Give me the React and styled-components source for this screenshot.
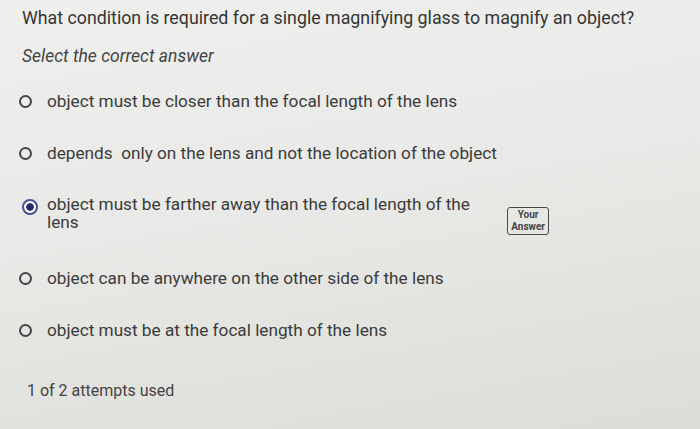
import React from 'react'
import styled, { createGlobalStyle } from 'styled-components'

const GlobalStyle = createGlobalStyle`
  html, body {
    margin: 0;
    padding: 0;
  }
  body {
    font-family: Roboto, "Liberation Sans", sans-serif;
    color: #3b3b3b;
  }
`

const Page = styled.div`
  width: 700px;
  height: 429px;
  box-sizing: border-box;
  padding: 7px 22px 0 22px;
  background: linear-gradient(170deg, #efefed 0%, #e9e9e7 45%, #dcdcd8 100%);
  overflow: hidden;
`

const Question = styled.div`
  font-size: 17.8px;
  line-height: 22px;
  color: #353535;
`

const Hint = styled.div`
  margin-top: 17px;
  font-size: 17.5px;
  line-height: 20px;
  font-style: italic;
  color: #444;
`

const Options = styled.div`
  margin-top: 9px;
  display: flex;
  flex-direction: column;
`

const Option = styled.div`
  display: flex;
  align-items: ${(p) => (p.multi ? 'flex-start' : 'center')};
  min-height: 52px;
  padding: ${(p) => (p.multi ? '16px 0 17px' : '0')};
  box-sizing: border-box;
`

const Radio = styled.span`
  flex: none;
  width: 13px;
  height: 13px;
  margin: 0 15px 0 -3px;
  border-radius: 50%;
  box-sizing: border-box;
  border: 2px solid #444;

  &[data-checked='true'] {
    width: 16px;
    height: 16px;
    margin: 4px 9px 0 0;
    border-color: #4a4fa0;
    background: radial-gradient(circle, #262a6c 0 3.5px, #fff 4px);
  }
`

const Label = styled.div`
  font-size: 17.2px;
  line-height: 18px;
  color: #3b3b3b;
  white-space: pre-wrap;
  max-width: ${(p) => (p.multi ? '440px' : 'none')};
`

const Badge = styled.div`
  margin-left: auto;
  margin-right: 129px;
  margin-top: 12px;
  border: 1.5px solid #4a4a4a;
  border-radius: 3px;
  padding: 1px 3px;
  font-size: 10px;
  line-height: 12px;
  font-weight: bold;
  text-align: center;
  color: #444;
`

const Attempts = styled.div`
  margin-top: 25px;
  margin-left: 5px;
  font-size: 16px;
  line-height: 20px;
  color: #444;
`

const options = [
  { id: 1, text: 'object must be closer than the focal length of the lens' },
  { id: 2, text: 'depends  only on the lens and not the location of the object' },
  {
    id: 3,
    text: 'object must be farther away than the focal length of the lens',
    checked: true,
    multi: true,
  },
  { id: 4, text: 'object can be anywhere on the other side of the lens' },
  { id: 5, text: 'object must be at the focal length of the lens' },
]

function App() {
  return (
    <Page>
      <GlobalStyle />
      <Question>
        What condition is required for a single magnifying glass to magnify an object?
      </Question>
      <Hint>Select the correct answer</Hint>
      <Options>
        {options.map(({ id, text, checked, multi }) => (
          <Option key={id} multi={multi}>
            <Radio data-checked={checked ? 'true' : 'false'} />
            <Label multi={multi}>{text}</Label>
            {checked && (
              <Badge>
                Your
                <br />
                Answer
              </Badge>
            )}
          </Option>
        ))}
      </Options>
      <Attempts>1 of 2 attempts used</Attempts>
    </Page>
  )
}

export default App
